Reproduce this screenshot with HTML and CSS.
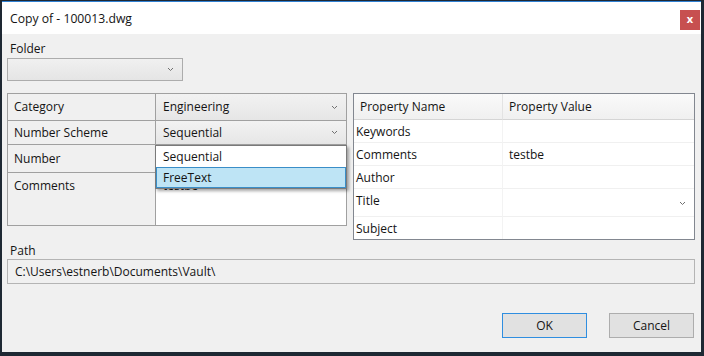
FILE: index.html
```html
<!DOCTYPE html>
<html lang="en">

<head>
    <meta charset="UTF-8">
    <title>Copy of - 100013.dwg</title>
    <link rel="stylesheet" href="styles.css">
</head>

<body>
    <div class="window">
        <div class="titlebar">
            <span class="title">Copy of - 100013.dwg</span>
            <div class="close">x</div>
        </div>

        <div class="content">
            <div class="label">Folder</div>
            <div class="combo folder-combo">
                <span></span>
                <svg class="chev" width="7" height="5" viewBox="0 0 7 5"><path d="M1 1 L3.5 3.5 L6 1" fill="none" stroke="#707070" stroke-width="1"/></svg>
            </div>

            <div class="tables">
                <div class="props-left">
                    <div class="cell name">Category</div>
                    <div class="cell combo-cell">
                        <span>Engineering</span>
                        <svg class="chev" width="7" height="5" viewBox="0 0 7 5"><path d="M1 1 L3.5 3.5 L6 1" fill="none" stroke="#707070" stroke-width="1"/></svg>
                    </div>
                    <div class="cell name">Number Scheme</div>
                    <div class="cell combo-cell">
                        <span>Sequential</span>
                        <svg class="chev" width="7" height="5" viewBox="0 0 7 5"><path d="M1 1 L3.5 3.5 L6 1" fill="none" stroke="#707070" stroke-width="1"/></svg>
                    </div>
                    <div class="cell name">Number</div>
                    <div class="cell value"></div>
                    <div class="cell name top">Comments</div>
                    <div class="cell value text-area">testbe</div>

                    <!-- open number scheme list -->
                    <div class="popup">
                        <div class="option">Sequential</div>
                        <div class="option selected">FreeText</div>
                    </div>
                </div>

                <div class="props-right">
                    <div class="head">Property Name</div>
                    <div class="head">Property Value</div>
                    <div class="pname">Keywords</div>
                    <div class="pval"></div>
                    <div class="pname">Comments</div>
                    <div class="pval">testbe</div>
                    <div class="pname">Author</div>
                    <div class="pval"></div>
                    <div class="pname tall">Title</div>
                    <div class="pval tall">
                        <span></span>
                        <svg class="chev" width="7" height="5" viewBox="0 0 7 5"><path d="M1 1 L3.5 3.5 L6 1" fill="none" stroke="#707070" stroke-width="1"/></svg>
                    </div>
                    <div class="pname">Subject</div>
                    <div class="pval"></div>
                </div>
            </div>

            <div class="label path-label">Path</div>
            <div class="textbox">C:\Users\estnerb\Documents\Vault\</div>

            <div class="buttons">
                <div class="btn default">OK</div>
                <div class="btn">Cancel</div>
            </div>
        </div>
    </div>
</body>

</html>
```

FILE: styles.css
```css
body {
    margin: 0;
    padding: 1px 0 0 2px;
    background: #1e2833;
    font-family: "Open Sans", "Noto Sans", sans-serif;
    font-size: 12px;
    line-height: 16px;
    color: #141414;
}

.window {
    width: 699px;
    height: 350px;
    border-top: 1px solid #2f80d2;
    background: #f0f0f0;
    display: flex;
    flex-direction: column;
}

.titlebar {
    height: 32px;
    background: #fff;
    display: flex;
    justify-content: space-between;
    align-items: flex-start;
}

.title {
    padding-left: 8px;
    line-height: 33px;
    font-size: 12.2px;
}

.close {
    width: 20px;
    height: 20px;
    margin-top: 8px;
    margin-right: 1px;
    background: #c75050;
    color: #fff;
    font-weight: bold;
    font-size: 11px;
    line-height: 18px;
    text-align: center;
}

.content {
    padding: 7px 6px 0 5px;
    display: flex;
    flex-direction: column;
}

.label {
    padding-left: 3px;
}

.combo {
    box-sizing: border-box;
    height: 23px;
    border: 1px solid #acacac;
    background: linear-gradient(#f0f0f0, #e5e5e5);
    display: flex;
    justify-content: space-between;
    align-items: center;
    padding: 0 8px 0 7px;
}

.folder-combo {
    width: 176px;
    margin-top: 1px;
}

.tables {
    display: flex;
    gap: 6px;
    margin-top: 12px;
    align-items: flex-start;
}

/* left property grid */
.props-left {
    position: relative;
    width: 340px;
    box-sizing: border-box;
    display: grid;
    grid-template-columns: 147px 1fr;
    grid-template-rows: 26px 23px 27px 52px;
    gap: 1px;
    padding: 1px;
    background: #a0a0a0;
}

.cell {
    background: #f0f0f0;
    display: flex;
    align-items: center;
    padding-left: 6px;
}

.cell.top {
    align-items: flex-start;
    padding-top: 5px;
}

.combo-cell {
    background: linear-gradient(#f2f2f2, #e6e6e6);
    justify-content: space-between;
    padding: 0 8px 0 7px;
}

.value {
    background: #fff;
}

.text-area {
    align-items: flex-start;
    padding: 5px 0 0 7px;
}

.popup {
    position: absolute;
    left: 148px;
    top: 52px;
    width: 192px;
    height: 44px;
    box-sizing: border-box;
    border: 1px solid #7a7a7a;
    background: #fff;
    box-shadow: 2px 2px 3px rgba(0, 0, 0, 0.35);
    display: flex;
    flex-direction: column;
}

.option {
    height: 21px;
    padding-left: 7px;
    display: flex;
    align-items: center;
    box-sizing: border-box;
}

.option.selected {
    background: #bee4f5;
    border: 1px solid #3a8ec8;
    padding-left: 6px;
}

/* right property grid */
.props-right {
    width: 342px;
    box-sizing: border-box;
    border: 1px solid #828790;
    background: #fff;
    display: grid;
    grid-template-columns: 149px 1fr;
    grid-template-rows: 26px 23px 23px 23px 28px 22px;
}

.head {
    background: linear-gradient(#fafafa, #f0f0f0);
    border-bottom: 1px solid #d5d5d5;
    display: flex;
    align-items: center;
    padding-left: 6px;
}

.head:first-child {
    border-right: 1px solid #e3e3e3;
}

.pname,
.pval {
    display: flex;
    align-items: center;
    padding-top: 1px;
    border-bottom: 1px solid #f0f0f0;
}

.pname {
    padding-left: 2px;
    border-right: 1px solid #f3f3f3;
}

.pval {
    padding-left: 6px;
}

.pname.tall {
    align-items: flex-start;
    padding-top: 4px;
}

.pval.tall {
    justify-content: space-between;
    padding-right: 8px;
}

.pname:nth-last-child(2),
.pval:last-child {
    border-bottom: none;
}

.path-label {
    margin-top: 3px;
}

.textbox {
    box-sizing: border-box;
    height: 25px;
    border: 1px solid #b4b4b4;
    background: #f0f0f0;
    display: flex;
    align-items: center;
    padding-left: 7px;
}

.buttons {
    display: flex;
    justify-content: flex-end;
    gap: 22px;
    margin-top: 29px;
    padding-right: 1px;
}

.btn {
    box-sizing: border-box;
    width: 85px;
    height: 25px;
    border: 1px solid #adadad;
    background: #e1e1e1;
    display: flex;
    align-items: center;
    justify-content: center;
}

.btn.default {
    border-color: #2f8ee0;
}
```
